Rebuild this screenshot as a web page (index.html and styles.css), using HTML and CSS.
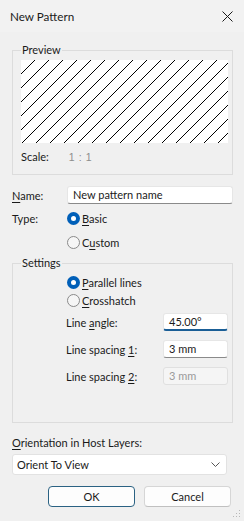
FILE: index.html
```html
<!DOCTYPE html>
<html>
<head>
<meta charset="utf-8">
<link rel="stylesheet" href="styles.css">
</head>
<body>
<div class="window">
  <div class="titlebar">
    <span class="title">New Pattern</span>
    <svg class="close" width="11" height="11" viewBox="0 0 11 11"><path d="M0.5 0.5 L10.5 10.5 M10.5 0.5 L0.5 10.5" stroke="#1a1a1a" stroke-width="1" fill="none"/></svg>
  </div>
  <div class="content">
    <fieldset class="group preview-group">
      <legend>Preview</legend>
      <div class="hatch">
        <svg width="207" height="83" viewBox="0 0 207 83">
          <defs>
            <pattern id="h" width="14" height="14" patternUnits="userSpaceOnUse">
              <path d="M0 13h1v1h-1z M1 12h1v1h-1z M2 11h1v1h-1z M3 10h1v1h-1z M4 9h1v1h-1z M5 8h1v1h-1z M6 7h1v1h-1z M7 6h1v1h-1z M8 5h1v1h-1z M9 4h1v1h-1z M10 3h1v1h-1z M11 2h1v1h-1z M12 1h1v1h-1z M13 0h1v1h-1z" fill="#000"/>
            </pattern>
          </defs>
          <rect width="207" height="83" fill="#fff"/>
          <rect width="207" height="83" fill="url(#h)"/>
        </svg>
      </div>
      <div class="scale-row"><span>Scale:</span><span class="scale-val">1 : 1</span></div>
    </fieldset>

    <div class="row name-row">
      <span class="lbl"><u>N</u>ame:</span>
      <div class="textbox name-box">New pattern name</div>
    </div>
    <div class="row type-row">
      <span class="lbl">Type:</span>
      <span class="radio checked"></span><span class="rtext"><u>B</u>asic</span>
    </div>
    <div class="row custom-row">
      <span class="radio"></span><span class="rtext">C<u>u</u>stom</span>
    </div>

    <fieldset class="group settings-group">
      <legend>Settings</legend>
      <div class="srow parallel-row"><span class="radio checked"></span><span class="rtext"><u>P</u>arallel lines</span></div>
      <div class="srow cross-row"><span class="radio"></span><span class="rtext"><u>C</u>rosshatch</span></div>
      <div class="frow angle-row"><span class="flbl">Line <u>a</u>ngle:</span><div class="textbox fbox focused">45.00°</div></div>
      <div class="frow sp1-row"><span class="flbl">Line spacing <u>1</u>:</span><div class="textbox fbox">3 mm</div></div>
      <div class="frow sp2-row"><span class="flbl">Line spacing <u>2</u>:</span><div class="textbox fbox disabled">3 mm</div></div>
    </fieldset>

    <div class="orient-label"><u>O</u>rientation in Host Layers:</div>
    <div class="dropdown">
      <span>Orient To View</span>
      <svg width="9" height="5" viewBox="0 0 9 5"><path d="M0.5 0.5 L4.5 4.5 L8.5 0.5" stroke="#555" stroke-width="1" fill="none"/></svg>
    </div>
    <div class="buttons">
      <div class="btn default">OK</div>
      <div class="btn">Cancel</div>
    </div>
  </div>
  <svg class="grip" width="8" height="8" viewBox="0 0 8 8">
    <rect x="6" y="0" width="1" height="1" fill="#b8b8b8"/>
    <rect x="3" y="3" width="1" height="1" fill="#b8b8b8"/>
    <rect x="6" y="3" width="1" height="1" fill="#b8b8b8"/>
    <rect x="0" y="6" width="1" height="1" fill="#b8b8b8"/>
    <rect x="3" y="6" width="1" height="1" fill="#b8b8b8"/>
    <rect x="6" y="6" width="1" height="1" fill="#b8b8b8"/>
  </svg>
</div>
</body>
</html>
```

FILE: styles.css
```css
* { box-sizing: border-box; }
html, body { margin: 0; padding: 0; }
body {
  width: 244px;
  height: 521px;
  background: #f0f0f0;
  font-family: "Lato", "Noto Sans", sans-serif;
  font-size: 11px;
  color: #1a1a1a;
  overflow: hidden;
}
u { text-decoration: underline; text-underline-offset: 2px; }
.window {
  position: relative;
  width: 244px;
  height: 521px;
  background: #f0f0f0;
  display: flex;
  flex-direction: column;
}
.titlebar {
  height: 32px;
  display: flex;
  align-items: center;
  justify-content: space-between;
  padding: 0 10px 0 10px;
  background: #f2f2f2;
}
.title { font-size: 11.7px; color: #1a1a1a; }
.close { margin-right: 1px; }
.content {
  display: flex;
  flex-direction: column;
  padding: 0 11px 0 12px;
}
.group {
  margin: 0;
  border: 1px solid #dcdcdc;
  padding: 0 4px 0 8px;
  min-width: 0;
}
.group legend {
  padding: 0 1px;
  line-height: 16px;
  height: 16px;
}
.preview-group { margin-top: 10px; padding-bottom: 9px; }
.hatch { margin-top: 2px; height: 83px; line-height: 0; }
.hatch svg { display: block; shape-rendering: crispEdges; }
.scale-row {
  margin-top: 6px;
  height: 16px;
  line-height: 16px;
  display: flex;
}
.scale-val {
  margin-left: 20px;
  color: #8c8c8c;
  font-family: "Liberation Sans", sans-serif;
  font-size: 10.5px;
  letter-spacing: 0.6px;
}
.row { display: flex; align-items: center; height: 18px; }
.lbl { width: 55px; }
.name-row { margin-top: 11px; }
.type-row { margin-top: 5px; }
.custom-row { margin-top: 6px; padding-left: 55px; }
.textbox {
  height: 18px;
  line-height: 16px;
  background: #fff;
  border: 1px solid #e6e6e6;
  border-bottom-color: #8a8a8a;
  border-radius: 3px;
  padding: 0 5px;
}
.name-box { flex: 1; }
.radio {
  width: 13px;
  height: 13px;
  border-radius: 50%;
  border: 1px solid #8a8a8a;
  background: #f6f6f6;
  flex: none;
  position: relative;
}
.radio.checked {
  border: none;
  background: #005fb8;
}
.radio.checked::after {
  content: "";
  position: absolute;
  left: 4px; top: 4px;
  width: 5px; height: 5px;
  border-radius: 50%;
  background: #fff;
}
.rtext { margin-left: 2px; }
.settings-group { margin-top: 4px; padding-bottom: 37px; }
.srow { display: flex; align-items: center; height: 18px; padding-left: 46px; }
.parallel-row { margin-top: 2px; }
.frow {
  display: flex;
  align-items: center;
  justify-content: space-between;
  height: 18px;
  padding-left: 45px;
  padding-right: 0;
}
.angle-row { margin-top: 4px; }
.sp1-row { margin-top: 9px; }
.sp2-row { margin-top: 9px; }
.fbox { width: 65px; }
.fbox.focused { border-bottom: 2px solid #1a5e96; }
.fbox.disabled { background: #f5f5f5; border-color: #e0e0e0; color: #9a9a9a; }
.orient-label { margin-top: 12px; height: 16px; line-height: 16px; }
.dropdown {
  margin-top: 3px;
  margin-right: 6px;
  height: 21px;
  display: flex;
  align-items: center;
  justify-content: space-between;
  background: #fff;
  border: 1px solid #e2e2e2;
  border-radius: 3px;
  padding: 0 6px 0 4px;
}
.buttons {
  margin-top: 11px;
  display: flex;
  justify-content: flex-end;
  gap: 9px;
  padding-right: 2px;
}
.btn {
  width: 87px;
  height: 21px;
  line-height: 19px;
  text-align: center;
  background: #fdfdfd;
  border: 1px solid #d6d6d6;
  border-bottom-color: #c0c0c0;
  border-radius: 4px;
}
.btn.default { border-color: #2b6283; }
.grip { position: absolute; right: 3px; bottom: 3px; }
```
